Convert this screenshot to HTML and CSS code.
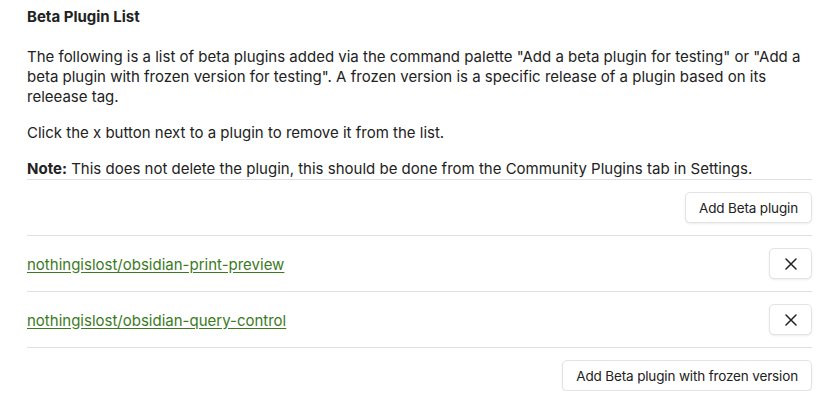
FILE: index.html
```html
<!DOCTYPE html>
<html>
<head>
<meta charset="utf-8">
<link rel="stylesheet" href="styles.css">
</head>
<body>
<div class="panel">
  <div class="heading">Beta Plugin List</div>
  <p class="desc first">The following is a list of beta plugins added via the command palette "Add a beta plugin for testing" or "Add a beta plugin with frozen version for testing". A frozen version is a specific release of a plugin based on its releease tag.</p>
  <p class="desc">Click the x button next to a plugin to remove it from the list.</p>
  <p class="desc last"><b>Note:</b> This does not delete the plugin, this should be done from the Community Plugins tab in Settings.</p>
  <div class="setting-item">
    <div class="info"></div>
    <button class="btn">Add Beta plugin</button>
  </div>
  <div class="setting-item">
    <div class="info"><a class="repo" href="#">nothingislost/obsidian-print-preview</a></div>
    <button class="btn icon-btn" aria-label="Remove"><svg width="16" height="16" viewBox="0 0 16 16"><path d="M3 3 L13 13 M13 3 L3 13" stroke="#222" stroke-width="1.5" fill="none" stroke-linecap="round"/></svg></button>
  </div>
  <div class="setting-item">
    <div class="info"><a class="repo" href="#">nothingislost/obsidian-query-control</a></div>
    <button class="btn icon-btn" aria-label="Remove"><svg width="16" height="16" viewBox="0 0 16 16"><path d="M3 3 L13 13 M13 3 L3 13" stroke="#222" stroke-width="1.5" fill="none" stroke-linecap="round"/></svg></button>
  </div>
  <div class="setting-item">
    <div class="info"></div>
    <button class="btn">Add Beta plugin with frozen version</button>
  </div>
</div>
</body>
</html>
```
FILE: styles.css
```css
html, body {
  margin: 0;
  padding: 0;
  background: #ffffff;
}
body {
  font-family: Inter, "Noto Sans", "Liberation Sans", sans-serif;
  color: #222222;
}
.panel {
  width: 785px;
  padding: 7px 0 0 27px;
}
.heading {
  font-size: 15px;
  font-weight: 700;
  line-height: 20px;
}
.desc {
  font-size: 15px;
  line-height: 20px;
  margin: 16px 0 0 0;
}
.desc.first {
  margin-top: 20px;
}
.desc.last {
  margin-bottom: 0;
}
.desc b {
  font-weight: 700;
}
.setting-item {
  display: flex;
  align-items: center;
  justify-content: space-between;
  border-top: 1px solid #e0e0e0;
  padding: 12px 0;
}
.setting-item:last-child {
  padding-bottom: 0;
}
.info {
  flex: 1;
}
.repo {
  color: #3b7a1e;
  font-size: 15px;
  text-decoration: underline;
  text-underline-offset: 2px;
}
.btn {
  font-family: Inter, "Noto Sans", "Liberation Sans", sans-serif;
  font-size: 13.5px;
  letter-spacing: -0.15px;
  color: #222222;
  background: #ffffff;
  border: 1px solid #e3e3e3;
  border-radius: 5px;
  box-shadow: 0 1px 2px rgba(0, 0, 0, 0.08);
  height: 31px;
  padding: 0 13px;
  display: flex;
  align-items: center;
  justify-content: center;
}
.icon-btn {
  width: 43px;
  padding: 0;
}
```
